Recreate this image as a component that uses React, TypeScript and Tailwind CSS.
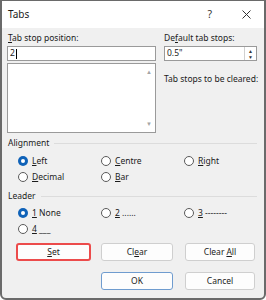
import React from "react";

const font = { fontFamily: '"Noto Sans", "Open Sans", Arial, sans-serif' };

function Radio({ checked, children }: { checked?: boolean; children: React.ReactNode }) {
  return (
    <div className="flex items-center h-[16px]">
      {checked ? (
        <span className="w-[10px] h-[10px] rounded-full bg-[#0f62b8] flex items-center justify-center shrink-0">
          <span className="w-[4px] h-[4px] rounded-full bg-white" />
        </span>
      ) : (
        <span className="w-[10px] h-[10px] rounded-full border border-[#5a5a5a] bg-white shrink-0" />
      )}
      <span className="ml-[4px] text-[8.5px] leading-[12px] text-[#1b1b1b] whitespace-nowrap">{children}</span>
    </div>
  );
}

function Btn({ children, variant }: { children: React.ReactNode; variant?: "red" | "default" }) {
  const cls =
    variant === "red"
      ? "border-2 border-[#ec4b4b]"
      : variant === "default"
      ? "border border-[#6f9ccf]"
      : "border border-[#cfcfcf]";
  return (
    <div className={`h-[18px] bg-[#fdfdfd] rounded-[3px] flex items-center justify-center text-[8.5px] text-[#1b1b1b] whitespace-nowrap ${cls}`}>
      {children}
    </div>
  );
}

export default function App() {
  return (
    <div style={font} className="w-[266px] h-[300px] bg-[#f0f0f0] border-2 border-t border-[#6a6a6a] rounded-b-[6px] flex flex-col overflow-hidden">
      {/* Title bar */}
      <div className="h-[27px] bg-white flex items-center pl-[6px] pr-[13px] shrink-0">
        <span className="text-[10px] text-[#1b1b1b]">Tabs</span>
        <span className="ml-auto text-[10.5px] text-[#333] mr-[30px]">?</span>
        <svg width="9" height="9" viewBox="0 0 9 9" className="block">
          <path d="M0.5 0.5 L8.5 8.5 M8.5 0.5 L0.5 8.5" stroke="#333" strokeWidth="1" />
        </svg>
      </div>

      <div className="px-[5px] pt-[3px] flex flex-col">
        {/* top two columns */}
        <div className="flex">
          <div className="w-[149px] flex flex-col">
            <div className="h-[14px] text-[8.5px] leading-[14px] text-[#1b1b1b] pl-[1px] whitespace-nowrap">
              <span className="underline">T</span>ab stop position:
            </div>
            <div className="mt-[1px] h-[15px] bg-white border border-[#9a9a9a] flex items-center px-[2px] text-[8.5px] text-[#1b1b1b]">
              2<span className="w-px h-[10px] bg-black ml-[1px]" />
            </div>
            <div className="mt-[2px] h-[70px] bg-white border border-[#9a9a9a] flex justify-end">
              <div className="w-[12px] flex flex-col items-center justify-between py-[5px]">
                <span className="text-[6px] leading-none text-[#a5a5a5]">▲</span>
                <span className="text-[6px] leading-none text-[#a5a5a5]">▼</span>
              </div>
            </div>
          </div>
          <div className="ml-[8px] w-[93px] flex flex-col">
            <div className="h-[14px] text-[8.5px] leading-[14px] text-[#1b1b1b] whitespace-nowrap">
              De<span className="underline">f</span>ault tab stops:
            </div>
            <div className="mt-[1px] h-[15px] bg-white border border-[#9a9a9a] flex items-center text-[8.5px] text-[#1b1b1b]">
              <span className="pl-[2px]">0.5"</span>
              <div className="ml-auto h-full w-[12px] border-l border-[#d0d0d0] flex flex-col items-center justify-center">
                <span className="text-[5px] leading-[6px] text-[#333]">▲</span>
                <span className="text-[5px] leading-[6px] text-[#333]">▼</span>
              </div>
            </div>
            <div className="mt-[12px] text-[8.5px] leading-[12px] text-[#1b1b1b] whitespace-nowrap">Tab stops to be cleared:</div>
          </div>
        </div>

        {/* Alignment */}
        <div className="mt-[3px] flex items-center h-[14px]">
          <span className="text-[8.5px] leading-[12px] text-[#1b1b1b] pl-[1px]">Alignment</span>
          <div className="flex-1 h-px bg-[#dcdcdc] ml-[5px] mr-[2px]" />
        </div>
        <div className="pl-[11px] pt-[3px] grid grid-cols-[83px_83px_83px]">
          <Radio checked><span className="underline">L</span>eft</Radio>
          <Radio><span className="underline">C</span>entre</Radio>
          <Radio><span className="underline">R</span>ight</Radio>
          <Radio><span className="underline">D</span>ecimal</Radio>
          <Radio><span className="underline">B</span>ar</Radio>
        </div>

        {/* Leader */}
        <div className="mt-[4px] flex items-center h-[14px]">
          <span className="text-[8.5px] leading-[12px] text-[#1b1b1b] pl-[1px]">Leader</span>
          <div className="flex-1 h-px bg-[#dcdcdc] ml-[5px] mr-[2px]" />
        </div>
        <div className="pl-[11px] pt-[2px] grid grid-cols-[83px_83px_83px]">
          <Radio checked><span className="underline">1</span> None</Radio>
          <Radio><span className="underline">2</span> ......</Radio>
          <Radio><span className="underline">3</span> --------</Radio>
          <Radio><span className="underline">4</span> ___</Radio>
        </div>

        {/* Buttons */}
        <div className="mt-[6px] grid grid-cols-[75px_72px_72px] gap-x-[10px] pl-[9px]">
          <Btn variant="red"><span className="underline">S</span>et</Btn>
          <Btn>Cl<span className="underline">e</span>ar</Btn>
          <div className="ml-[2px]">
            <Btn>Clear <span className="underline ml-[2px]">A</span>ll</Btn>
          </div>
        </div>
        <div className="mt-[11px] grid grid-cols-[75px_72px_72px] gap-x-[10px] pl-[9px]">
          <div />
          <Btn variant="default">OK</Btn>
          <div className="ml-[2px]">
            <Btn>Cancel</Btn>
          </div>
        </div>
      </div>
    </div>
  );
}
